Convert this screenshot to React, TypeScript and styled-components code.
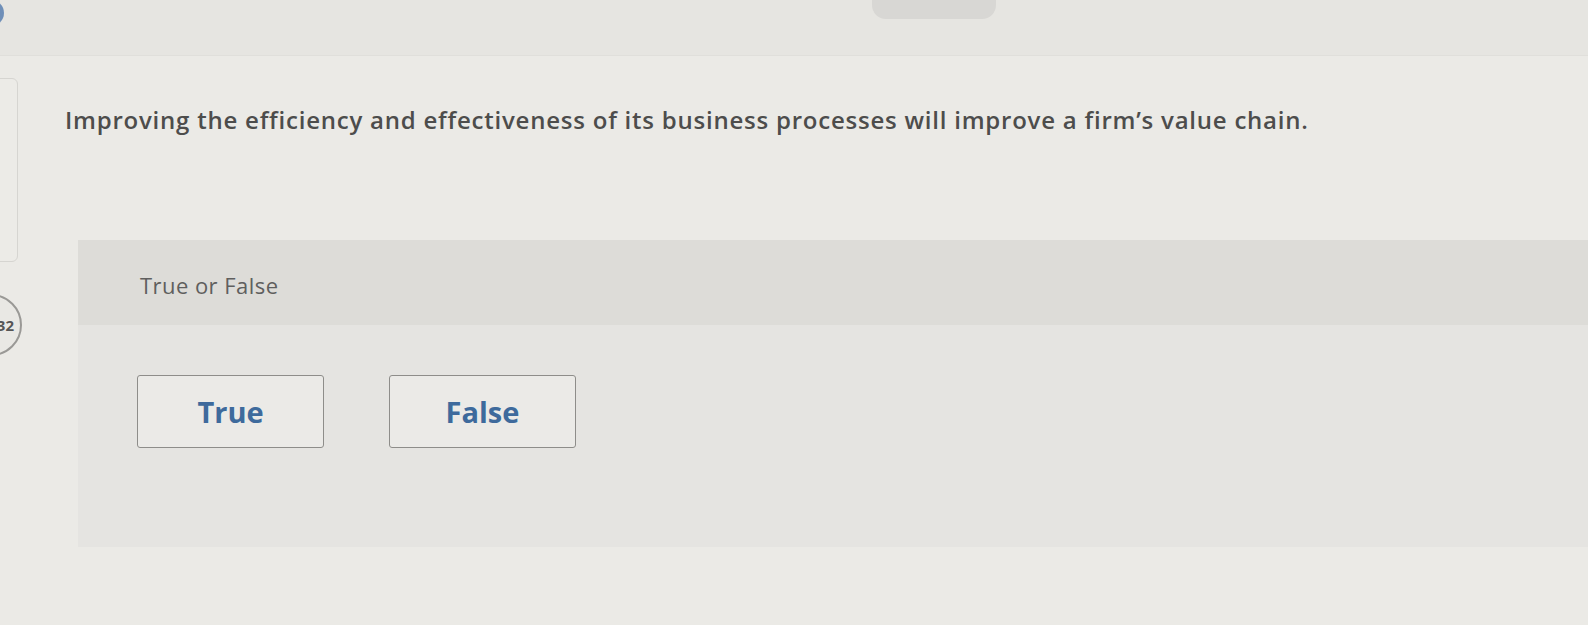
import React from "react";
import styled, { createGlobalStyle } from "styled-components";

const GlobalStyle = createGlobalStyle`
    html, body {
        margin: 0;
        padding: 0;
        background: #ebeae6;
        font-family: "Open Sans", Lato, "Liberation Sans", sans-serif;
    }
    * { box-sizing: border-box; }
`;

const Page = styled.div`
    width: 1588px;
    height: 625px;
    overflow: hidden;
    position: relative;
    background: #ebeae6;
    display: flex;
    flex-direction: column;
`;

const TopStrip = styled.div`
    height: 56px;
    flex-shrink: 0;
    background: #e6e5e1;
    border-bottom: 1px solid #e0dfdb;
    display: flex;
    justify-content: center;
    position: relative;
`;

const SavedPill = styled.div`
    margin-top: -12px;
    margin-left: 280px;
    width: 124px;
    height: 31px;
    border-radius: 0 0 14px 14px;
    background: #d8d7d4;
    color: #8c8b88;
    font-size: 17px;
    font-weight: 700;
    display: flex;
    align-items: flex-start;
    justify-content: center;
    line-height: 8px;
    overflow: hidden;
`;

const BlueDot = styled.div`
    position: absolute;
    left: -22px;
    top: 0;
    width: 26px;
    height: 26px;
    border-radius: 50%;
    background: #6f8fb8;
`;

const Body = styled.div`
    flex: 1;
    display: flex;
    flex-direction: column;
    position: relative;
`;

const SideCard = styled.div`
    position: absolute;
    left: -20px;
    top: 22px;
    width: 38px;
    height: 184px;
    border: 1px solid #d6d5d1;
    border-radius: 0 6px 6px 0;
    background: #ecebe7;
`;

const NumberBadge = styled.div`
    position: absolute;
    left: -40px;
    top: 238px;
    width: 62px;
    height: 62px;
    border-radius: 50%;
    border: 2px solid #9a9996;
    background: #e9e8e4;
    color: #555;
    font-size: 15px;
    font-weight: 700;
    display: flex;
    align-items: center;
    justify-content: flex-end;
    padding-right: 6px;
`;

const Question = styled.p`
    margin: 48px 0 0 65px;
    font-size: 24px;
    line-height: 32px;
    font-weight: 600;
    color: #4d4d4c;
    letter-spacing: 0.77px;
    white-space: nowrap;
`;

const AnswerPanel = styled.div`
    margin: 104px 0 0 78px;
    width: 1530px;
    height: 307px;
    background: #e5e4e1;
    display: flex;
    flex-direction: column;
`;

const PanelHeader = styled.div`
    height: 85px;
    background: #dddcd8;
    padding: 30px 0 0 62px;
    font-size: 22px;
    letter-spacing: 0.45px;
    color: #5f5f5e;
`;

const Choices = styled.div`
    display: flex;
    gap: 65px;
    padding: 50px 0 0 59px;
`;

const ChoiceButton = styled.button`
    width: 187px;
    height: 73px;
    background: #ebeae7;
    border: 1.5px solid #8e8d8a;
    border-radius: 3px;
    color: #3e6a9c;
    font-family: "Open Sans", Lato, "Liberation Sans", sans-serif;
    font-size: 29px;
    font-weight: 700;
    cursor: pointer;
`;

export default function App() {
    return (
        <>
            <GlobalStyle />
            <Page>
                <TopStrip>
                    <BlueDot />
                    <SavedPill>Saved</SavedPill>
                </TopStrip>
                <Body>
                    <SideCard />
                    <NumberBadge>32</NumberBadge>
                    <Question>
                        Improving the efficiency and effectiveness of its business processes will improve a firm’s value chain.
                    </Question>
                    <AnswerPanel>
                        <PanelHeader>True or False</PanelHeader>
                        <Choices>
                            <ChoiceButton>True</ChoiceButton>
                            <ChoiceButton>False</ChoiceButton>
                        </Choices>
                    </AnswerPanel>
                </Body>
            </Page>
        </>
    );
}
